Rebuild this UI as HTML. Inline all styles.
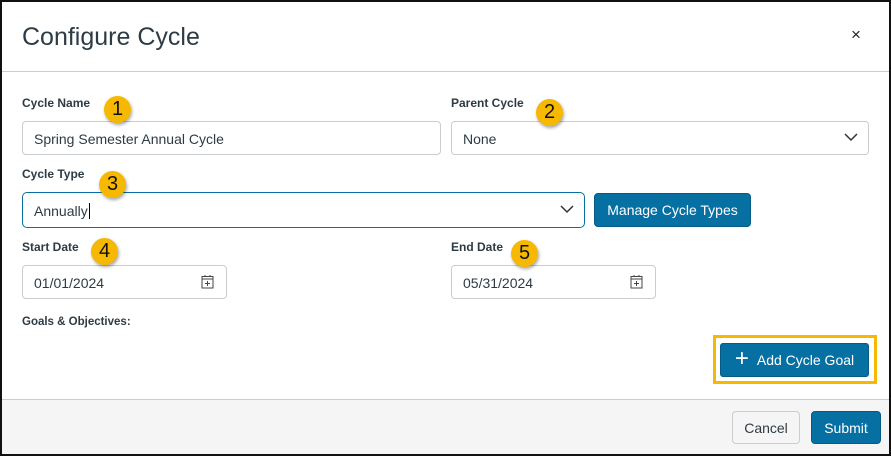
<!DOCTYPE html>
<html><head><style>
*{box-sizing:border-box;margin:0;padding:0}
body{width:891px;height:456px;position:relative;background:#fff;font-family:"Liberation Sans",sans-serif;color:#2d3b45;overflow:hidden}
.frame{position:absolute;left:0;top:0;width:891px;height:456px;border:2px solid #111;}
.a{position:absolute}
.lbl{position:absolute;font-size:12px;font-weight:bold;color:#2d3b45}
.inp{position:absolute;border:1px solid #c7cdd1;border-radius:4px;font-size:14px;color:#2d3b45;padding-left:11px;display:flex;align-items:center;background:#fff}
.btn{position:absolute;background:#0770a3;border:1px solid #065b86;border-radius:4px;color:#fff;font-size:14px;display:flex;align-items:center;justify-content:center}
.b{position:absolute;width:27px;height:27px;border-radius:50%;background:#f6b800;color:#111;font-size:20px;display:flex;align-items:center;justify-content:center;box-shadow:1px 2px 3px rgba(0,0,0,.35)}
.chev{position:absolute;right:10px;top:50%;margin-top:-5px}
.cal{position:absolute;right:12px;top:50%;margin-top:-8px}
</style></head><body>
<div class="a" style="left:0;top:0;width:891px;height:72px;border-bottom:1px solid #c7cdd1"></div>
<div class="a" style="left:22px;top:23px;font-size:25px;color:#2d3b45">Configure Cycle</div>
<div class="a" style="left:851px;top:25px;font-size:17px;color:#222">×</div>
<div class="a" style="left:0;top:399px;width:891px;height:57px;background:#f5f5f5;border-top:1px solid #c7cdd1"></div>

<div class="lbl" style="left:22px;top:96px">Cycle Name</div>
<div class="lbl" style="left:451px;top:96px">Parent Cycle</div>
<div class="inp" style="left:22px;top:121px;width:419px;height:34px;padding-top:2px">Spring Semester Annual Cycle</div>
<div class="inp" style="left:451px;top:121px;width:418px;height:34px;padding-top:2px">None<svg class="chev" width="14" height="9" viewBox="0 0 14 9"><path d="M1 1l6 6 6-6" fill="none" stroke="#333" stroke-width="1.5"/></svg></div>

<div class="lbl" style="left:22px;top:167px">Cycle Type</div>
<div class="inp" style="left:22px;top:192px;width:563px;height:36px;border:1.5px solid #0770a3;border-radius:5px;padding-top:2px">Annually<span style="display:inline-block;width:1px;height:16px;background:#000;margin-left:1px"></span><svg class="chev" width="14" height="9" viewBox="0 0 14 9"><path d="M1 1l6 6 6-6" fill="none" stroke="#333" stroke-width="1.5"/></svg></div>
<div class="btn" style="left:594px;top:193px;width:157px;height:34px">Manage Cycle Types</div>

<div class="lbl" style="left:22px;top:240px">Start Date</div>
<div class="lbl" style="left:451px;top:240px">End Date</div>
<div class="inp" style="left:22px;top:265px;width:205px;height:34px;padding-top:2px">01/01/2024<svg class="cal" width="13" height="15" viewBox="0 0 13 15"><rect x="1" y="2.5" width="11" height="11.5" fill="none" stroke="#444"/><path d="M1 5h11M4 1v2M9 1v2M6.5 7v5M4 9.5h5" stroke="#444" fill="none"/></svg></div>
<div class="inp" style="left:451px;top:265px;width:205px;height:34px;padding-top:2px">05/31/2024<svg class="cal" width="13" height="15" viewBox="0 0 13 15"><rect x="1" y="2.5" width="11" height="11.5" fill="none" stroke="#444"/><path d="M1 5h11M4 1v2M9 1v2M6.5 7v5M4 9.5h5" stroke="#444" fill="none"/></svg></div>

<div class="lbl" style="left:22px;top:316px;font-size:11.5px">Goals &amp; Objectives:</div>
<div class="a" style="left:713px;top:335px;width:164px;height:49px;border:3px solid #f6b800"></div>
<div class="btn" style="left:720px;top:343px;width:149px;height:34px;border-radius:3px"><span style="font-size:24px;font-weight:300;margin-right:8px;margin-top:-3px">+</span>Add Cycle Goal</div>

<div class="a" style="left:732px;top:411px;width:68px;height:33px;border:1px solid #c7cdd1;border-radius:4px;background:#f5f5f5;font-size:14px;display:flex;align-items:center;justify-content:center">Cancel</div>
<div class="btn" style="left:811px;top:411px;width:70px;height:33px">Submit</div>

<div class="b" style="left:104px;top:96px">1</div>
<div class="b" style="left:536px;top:99px">2</div>
<div class="b" style="left:99px;top:171px">3</div>
<div class="b" style="left:91px;top:238px">4</div>
<div class="b" style="left:511px;top:240px">5</div>
<div class="frame"></div>
</body></html>
